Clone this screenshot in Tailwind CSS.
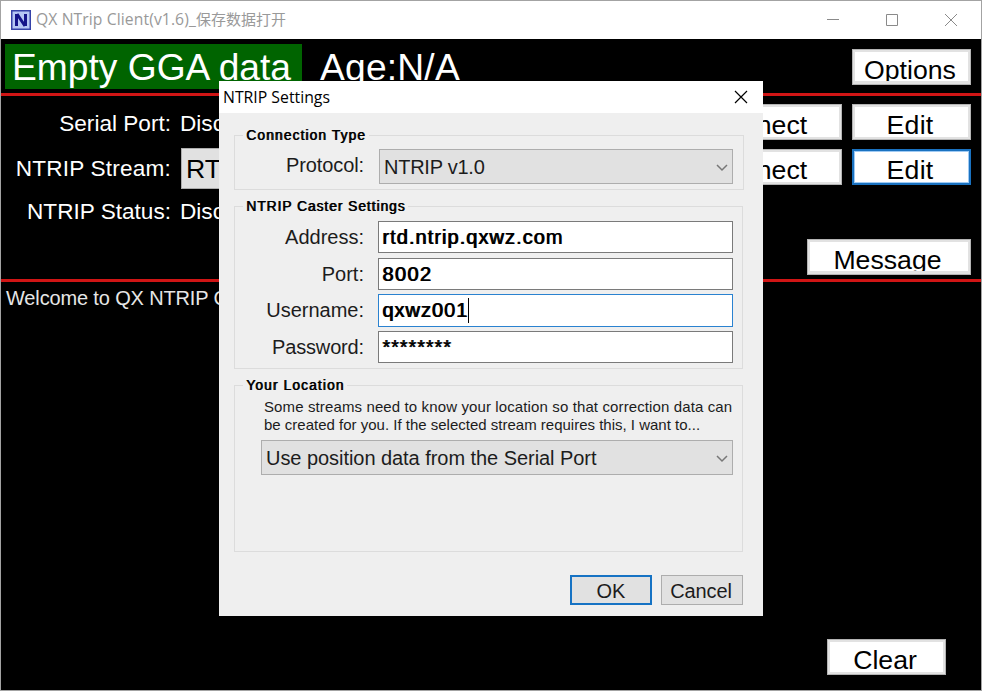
<!DOCTYPE html>
<html lang="zh-CN">
<head>
    <meta charset="UTF-8">
    <meta name="viewport" content="width=device-width, initial-scale=1.0">
    <title>QX NTrip Client</title>
    <script src="https://cdn.jsdelivr.net/npm/@tailwindcss/browser@4"></script>
</head>
<body class="font-['Liberation_Sans',Arial,sans-serif] overflow-hidden">
    <div class="relative w-[982px] h-[691px] border border-[#a3a3a3] bg-black flex flex-col text-white">
        <!-- Title bar -->
        <div class="h-[38px] shrink-0 bg-white flex items-center pl-[10px] pr-[23px] text-[#999]">
            <svg class="w-5 h-5 shrink-0" viewBox="0 0 20 20">
                <rect x=".75" y=".75" width="18.5" height="18.5" fill="#b4c6f4" stroke="#3542a8" stroke-width="1.5"/>
                <path d="M5.5 16V4M14.5 16V4M6 4L14 16" fill="none" stroke="#14148a" stroke-width="3"/>
            </svg>
            <span class="ml-[5px] text-[15.7px] tracking-[0.1px] whitespace-nowrap font-['Open_Sans','Noto_Sans_CJK_SC',sans-serif]">QX NTrip Client(v1.6)_<span class="text-[15px] tracking-normal">保存数据打开</span></span>
            <div class="ml-auto flex items-center gap-[45px]">
                <svg class="w-[14px] h-[14px]" viewBox="0 0 14 14" stroke="#8a8a8a" fill="none"><path d="M1 6.5h12"/></svg>
                <svg class="w-[14px] h-[14px]" viewBox="0 0 14 14" stroke="#8a8a8a" fill="none"><path d="M1.5 1.5h11v11h-11z"/></svg>
                <svg class="w-[14px] h-[14px]" viewBox="0 0 14 14" stroke="#8a8a8a" fill="none"><path d="M1 1l12 12M13 1L1 13"/></svg>
            </div>
        </div>

        <!-- GGA status -->
        <div class="h-[54px] shrink-0 flex items-start pl-1 pr-[10px] text-[37.2px] leading-[46px] whitespace-nowrap">
            <div class="mt-[5px] w-[297px] h-[45px] bg-[#006400] pl-[7px]">Empty GGA data</div>
            <div class="mt-[5px] ml-[18px] tracking-[0.2px]">Age:N/A</div>
            <button class="ml-auto mt-[10px] w-[119px] h-[36px] bg-white text-black border-3 border-b-4 border-[#e2e2e2] outline-1 -outline-offset-1 outline-[#b4b4b4] overflow-hidden text-[26.67px] leading-[36px] pr-[3px]">Options</button>
        </div>
        <div class="h-[3px] shrink-0 bg-[#d01515]"></div>

        <!-- Connections -->
        <div class="h-[183px] shrink-0 pr-[10px] pt-2 text-[22.6px] whitespace-nowrap flex flex-col">
            <div class="h-[36px] flex items-center">
                <span class="w-[170px] mt-[3px] text-right">Serial Port:</span>
                <span class="ml-[9px] mt-[3px]">Disconnected</span>
                <button class="ml-auto w-[169px] h-[36px] bg-white text-black border-3 border-[#e2e2e2] outline-1 -outline-offset-1 outline-[#b4b4b4] overflow-hidden text-[26.67px] leading-[36px]">Connect</button>
                <button class="ml-[10px] w-[119px] h-[36px] bg-white text-black border-3 border-[#e2e2e2] outline-1 -outline-offset-1 outline-[#b4b4b4] overflow-hidden text-[26.67px] leading-[36px] pr-[3px] tracking-[0.3px]">Edit</button>
            </div>
            <div class="mt-[9px] h-[36px] flex items-center">
                <span class="w-[170px] mt-[3px] text-right tracking-[0.2px]">NTRIP Stream:</span>
                <span class="ml-[10px] mt-[2px] w-[200px] h-[41px] bg-[#e1e1e1] border border-[#adadad] text-black text-[26.67px] leading-[40px] pl-1">RTCM</span>
                <button class="ml-auto w-[169px] h-[36px] bg-white text-black border-3 border-[#e2e2e2] outline-1 -outline-offset-1 outline-[#b4b4b4] overflow-hidden text-[26.67px] leading-[36px]">Connect</button>
                <button class="ml-[10px] w-[119px] h-[36px] bg-white text-black border-3 border-[#9fcaf3] outline-2 -outline-offset-2 outline-[#1a72c0] overflow-hidden text-[26.67px] leading-[36px] pr-[3px] tracking-[0.3px]">Edit</button>
            </div>
            <div class="mt-[13px] h-[27px] flex items-center">
                <span class="w-[170px] text-right">NTRIP Status:</span>
                <span class="ml-[9px]">Disconnected</span>
            </div>
            <button class="mt-[14px] ml-auto w-[164px] h-[36px] shrink-0 bg-white text-black border-3 border-b-4 border-[#e2e2e2] outline-1 -outline-offset-1 outline-[#b4b4b4] overflow-hidden text-[26.67px] leading-[36px] pr-[3px]">Message</button>
        </div>
        <div class="h-[3px] shrink-0 bg-[#d01515]"></div>

        <!-- Log -->
        <div class="grow flex flex-col pl-[5px] pr-[35px] pb-[15px] pt-[4px]">
            <p class="text-[20px] leading-[24px] tracking-[-0.15px] text-[#e6e6e6]">Welcome to QX NTRIP Client</p>
            <button class="mt-auto ml-auto w-[119px] h-[36px] bg-white text-black border-3 border-[#e2e2e2] outline-1 -outline-offset-1 outline-[#b4b4b4] overflow-hidden text-[26.67px] leading-[36px] pr-[3px]">Clear</button>
        </div>

        <!-- NTRIP Settings dialog -->
        <div class="absolute left-[218px] top-[80px] w-[544px] h-[535px] bg-[#efefef] text-[#1c1c1c] flex flex-col whitespace-nowrap">
            <div class="h-[32px] shrink-0 bg-white text-black flex items-center justify-between pl-1 pr-[15px]">
                <span class="mt-px text-[15.8px] font-['Open_Sans',sans-serif]">NTRIP Settings</span>
                <svg class="w-[14px] h-[14px]" viewBox="0 0 14 14" stroke="#000" stroke-width="1.2"><path d="M1 1l12 12M13 1L1 13"/></svg>
            </div>

            <div class="grow pl-[15px] pr-5 pt-[13px] text-[20px]">
                <fieldset class="w-[510px] h-[64px] border border-[#dcdcdc] pl-[8px]">
                    <legend class="px-[3px] h-[18px] text-[13.8px] leading-[20px] tracking-[1.1px] text-black [text-shadow:0.8px_0_0_#000]">Connection Type</legend>
                    <div class="mt-[5px] flex items-start">
                        <label class="w-[121px] text-right leading-[32px] tracking-[-0.1px]">Protocol:</label>
                        <div class="ml-[15px] w-[354px] h-[35px] bg-[#e1e1e1] border border-[#adadad] flex items-center justify-between pl-1 pr-[4px]">
                            <span class="tracking-[-0.25px]">NTRIP v1.0</span>
                            <svg class="w-3 h-3" viewBox="0 0 12 12" fill="none" stroke="#777" stroke-width="1.5"><path d="M1 4l5 5 5-5"/></svg>
                        </div>
                    </div>
                </fieldset>

                <fieldset class="mt-[7px] w-[509px] h-[172px] border border-[#dcdcdc] pl-[8px]">
                    <legend class="px-[3px] h-[18px] text-[13.8px] leading-[20px] tracking-[0.95px] text-black [text-shadow:0.8px_0_0_#000]">NTRIP Caster Settings</legend>
                    <div class="mt-[6px] grid grid-cols-[121px_355px] gap-x-[14px] gap-y-[4.6px]">
                        <label class="text-right leading-[32px]">Address:</label>
                        <div class="h-[32px] bg-white border border-[#7a7a7a] text-black pl-[3px] leading-[31px] tracking-[1.05px] [text-shadow:0.9px_0_0_#000]">rtd.ntrip.qxwz.com</div>
                        <label class="text-right leading-[32px]">Port:</label>
                        <div class="h-[32px] bg-white border border-[#7a7a7a] text-black pl-[3px] leading-[31px] tracking-[1.4px] [text-shadow:0.9px_0_0_#000]">8002</div>
                        <label class="text-right leading-[32px]">Username:</label>
                        <div class="h-[32.5px] bg-white border border-[#2a82d0] text-black pl-[3px] leading-[32px] flex items-center tracking-[1px] [text-shadow:0.9px_0_0_#000]">qxwz001<i class="w-px h-[25px] bg-black"></i></div>
                        <label class="text-right leading-[32px] tracking-[-0.15px]">Password:</label>
                        <div class="h-[32px] bg-white border border-[#7a7a7a] text-black pl-[3px] leading-[31px] tracking-[0.9px] [text-shadow:0.9px_0_0_#000]">********</div>
                    </div>
                </fieldset>

                <fieldset class="mt-[7px] w-[509px] h-[176px] border border-[#dcdcdc] pl-[8px]">
                    <legend class="px-[3px] h-[18px] text-[13.8px] leading-[20px] tracking-[1.1px] text-black [text-shadow:0.8px_0_0_#000]">Your Location</legend>
                    <div class="mt-[4px] ml-[21px] text-[15px] leading-[17.5px]">
                        <p class="tracking-[0.12px]">Some streams need to know your location so that correction data can</p>
                        <p>be created for you. If the selected stream requires this, I want to...</p>
                    </div>
                    <div class="mt-[7px] ml-[18px] w-[472px] h-[35px] bg-[#e1e1e1] border border-[#adadad] flex items-center justify-between pl-1 pr-[4px]">
                        <span class="tracking-[-0.05px]">Use position data from the Serial Port</span>
                        <svg class="w-3 h-3" viewBox="0 0 12 12" fill="none" stroke="#777" stroke-width="1.5"><path d="M1 4l5 5 5-5"/></svg>
                    </div>
                </fieldset>

                <div class="mt-[23px] flex justify-end gap-[9px]">
                    <button class="w-[82px] h-[30px] bg-[#e1e1e1] border-2 border-[#1673c4] leading-[29px]">OK</button>
                    <button class="w-[82px] h-[30px] bg-[#e1e1e1] border border-[#adadad] leading-[31px] tracking-[-0.1px] pr-[2px]">Cancel</button>
                </div>
            </div>
        </div>
    </div>
</body>
</html>
